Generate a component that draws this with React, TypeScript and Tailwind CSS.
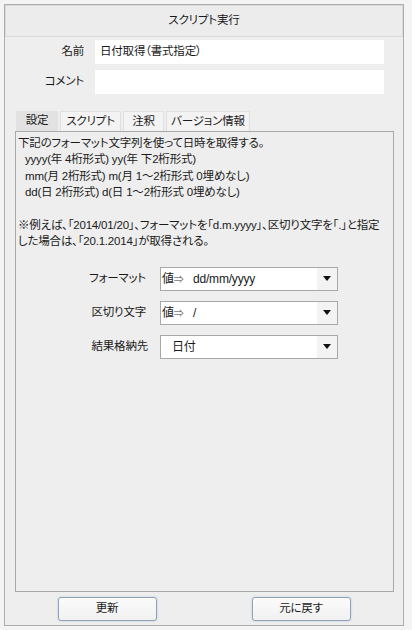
import React from "react";

const font = { fontFamily: '"Liberation Sans", "Noto Sans CJK JP", sans-serif' };

function Caret() {
  return (
    <svg width="8" height="5" viewBox="0 0 8 5">
      <polygon points="0,0 8,0 4,5" fill="#111" />
    </svg>
  );
}

function Select({ children }: { children: React.ReactNode }) {
  return (
    <div className="flex h-[24px] w-[178px] border border-[#a8a8a8] bg-white">
      <div className="flex flex-1 items-center overflow-hidden pl-[1px] text-[12px] text-[#1a1a1a]">
        <span className="whitespace-pre">{children}</span>
      </div>
      <div className="flex w-[20px] items-center justify-center bg-[#f3f3f3]">
        <Caret />
      </div>
    </div>
  );
}

const lines: [string, boolean][] = [
  ["下記のフォーマット文字列を使って日時を取得する。", false],
  ["yyyy(年 4桁形式) yy(年 下2桁形式)", true],
  ["mm(月 2桁形式) m(月 1〜2桁形式 0埋めなし)", true],
  ["dd(日 2桁形式) d(日 1〜2桁形式 0埋めなし)", true],
  [" ", false],
  ["※例えば、「2014/01/20」、フォーマットを「d.m.yyyy」、区切り文字を「.」と指定", false],
  ["した場合は、「20.1.2014」が取得される。", false],
];

export default function App() {
  return (
    <div
      className="h-[630px] w-[412px] bg-[#f4f4f4] pl-[4px] pt-[4px] text-[11.5px] tracking-[-0.2px] [font-feature-settings:'palt']"
      style={font}
    >
      <div className="flex h-[622px] w-[400px] flex-col border border-[#adadad] bg-[#eeeeee]">
        <div className="flex h-[32px] items-center justify-center border border-[#d9d9d9] bg-[#ececec] text-[#1a1a1a]">
          スクリプト実行
        </div>
        <div className="mt-[3px] flex items-center">
          <div className="w-[79px] text-right text-[#1a1a1a]">名前</div>
          <div className="ml-[11px] flex h-[24px] w-[289px] items-center bg-white pl-[5px] text-[#1a1a1a]">
            日付取得（書式指定）
          </div>
        </div>
        <div className="mt-[6px] flex items-center">
          <div className="w-[79px] text-right text-[#1a1a1a]">コメント</div>
          <div className="ml-[11px] h-[24px] w-[289px] bg-white" />
        </div>
        <div className="ml-[11px] mt-[17px] flex h-[20px] items-stretch gap-[2px] text-[#1a1a1a]">
          <div className="flex w-[42px] items-center justify-center bg-[#e2e2e2]">設定</div>
          <div className="flex w-[61px] items-center justify-center border border-b-0 border-[#e0e0e0] bg-[#f3f3f3]">
            スクリプト
          </div>
          <div className="flex w-[41px] items-center justify-center border border-b-0 border-[#e0e0e0] bg-[#f3f3f3]">
            注釈
          </div>
          <div className="flex w-[84px] items-center justify-center border border-b-0 border-[#e0e0e0] bg-[#f3f3f3]">
            バージョン情報
          </div>
        </div>
        <div className="ml-[10px] w-[379px] flex-1 border border-[#a9a9a9] bg-[#eeeeee] px-[2px] pt-[3px]">
          <div className="leading-[16.4px] text-[#1a1a1a]">
            {lines.map(([l, indent], i) => (
              <div key={i} className={indent ? "whitespace-pre pl-[7px]" : "whitespace-pre"}>
                {l}
              </div>
            ))}
          </div>
          <div className="mt-[17px] flex flex-col gap-[10px]">
            <div className="flex items-center">
              <div className="w-[128px] text-right text-[#1a1a1a]">フォーマット</div>
              <div className="ml-[14px]">
                <Select>
                  値<span className="text-[10px] text-[#777]">⇒</span>{"   "}dd/mm/yyyy
                </Select>
              </div>
            </div>
            <div className="flex items-center">
              <div className="w-[128px] text-right text-[#1a1a1a]">区切り文字</div>
              <div className="ml-[14px]">
                <Select>
                  値<span className="text-[10px] text-[#777]">⇒</span>{"   "}/
                </Select>
              </div>
            </div>
            <div className="flex items-center">
              <div className="w-[130px] text-right text-[#1a1a1a]">結果格納先</div>
              <div className="ml-[12px]">
                <Select>
                  <span className="pl-[10px]">日付</span>
                </Select>
              </div>
            </div>
          </div>
        </div>
        <div className="mb-[4px] mt-[5px] flex justify-center gap-[95px]">
          <button className="flex h-[24px] w-[99px] items-center justify-center rounded-[3px] border border-[#93a1b6] bg-gradient-to-b from-[#fbfbfb] to-[#f1f1f1] text-[#1a1a1a] shadow-[0_0_2px_rgba(120,160,220,0.5)]">
            更新
          </button>
          <button className="flex h-[24px] w-[99px] items-center justify-center rounded-[3px] border border-[#93a1b6] bg-gradient-to-b from-[#fbfbfb] to-[#f1f1f1] text-[#1a1a1a] shadow-[0_0_2px_rgba(120,160,220,0.5)]">
            元に戻す
          </button>
        </div>
      </div>
    </div>
  );
}
